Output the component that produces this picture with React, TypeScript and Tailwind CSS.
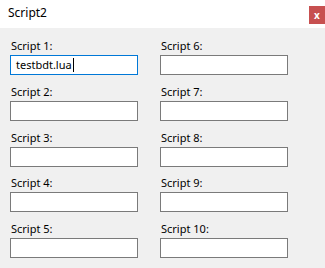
import React from "react";

const Field = ({ label, value, focused }: { label: string; value?: string; focused?: boolean }) => (
  <div className="flex flex-col">
    <div className="h-[19px] text-[11px] leading-[16px] pt-[2px] text-[#000] pl-[1px]">{label}</div>
    <div
      className={
        "h-[20px] w-[128px] bg-white border flex items-center pl-[5px] text-[11px] " +
        (focused ? "border-[#0078d7]" : "border-[#7a7a7a]")
      }
    >
      {value && (
        <span className="flex items-center">
          {value}
          <span className="inline-block w-[1px] h-[14px] bg-black ml-[1px]" />
        </span>
      )}
    </div>
  </div>
);

export default function App() {
  const left = ["Script 1:", "Script 2:", "Script 3:", "Script 4:", "Script 5:"];
  const right = ["Script 6:", "Script 7:", "Script 8:", "Script 9:", "Script 10:"];
  return (
    <div
      className="w-[325px] h-[268px] bg-[#f0f0f0] overflow-hidden flex flex-col"
      style={{ fontFamily: '"Noto Sans", "Open Sans", sans-serif' }}
    >
      <div className="h-[28px] bg-white flex items-start justify-between shrink-0">
        <div className="text-[12px] leading-[16px] pl-[8px] pt-[5px] text-black">Script2</div>
        <div className="mt-[6px] w-[16px] h-[18px] bg-[#c75050] flex items-center justify-center text-white text-[10px] font-bold leading-none">
          x
        </div>
      </div>
      <div className="flex pl-[10px] pt-[8px] gap-x-[22px]">
        <div className="flex flex-col gap-y-[6.75px]">
          {left.map((l, i) => (
            <Field key={l} label={l} value={i === 0 ? "testbdt.lua" : undefined} focused={i === 0} />
          ))}
        </div>
        <div className="flex flex-col gap-y-[6.75px]">
          {right.map((l) => (
            <Field key={l} label={l} />
          ))}
        </div>
      </div>
    </div>
  );
}
